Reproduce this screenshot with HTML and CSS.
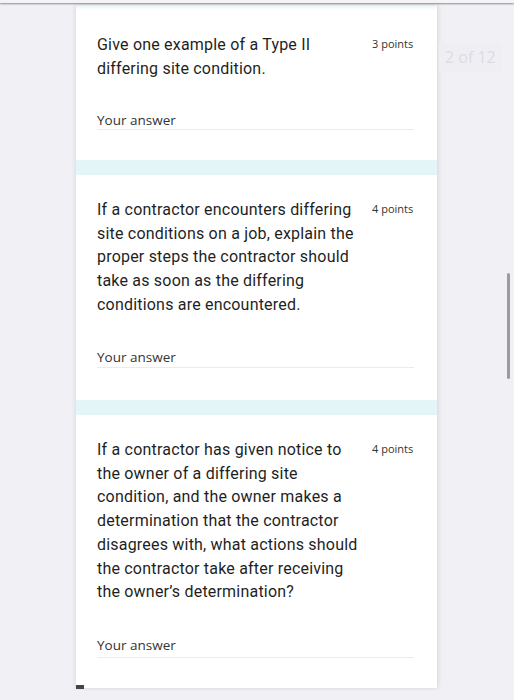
FILE: index.html
```html
<!DOCTYPE html>
<html>
<head>
<meta charset="utf-8">
<link rel="stylesheet" href="styles.css">
</head>
<body>
<div class="topbar"></div>
<div class="stage">
  <div class="column">
    <div class="card card-first">
      <div class="qrow">
        <div class="question">Give one example of a Type II<br>differing site condition.</div>
        <div class="points">3 points</div>
      </div>
      <div class="answer">Your answer</div>
    </div>
    <div class="band"></div>
    <div class="card card-mid">
      <div class="qrow">
        <div class="question">If a contractor encounters differing<br>site conditions on a job, explain the<br>proper steps the contractor should<br>take as soon as the differing<br>conditions are encountered.</div>
        <div class="points">4 points</div>
      </div>
      <div class="answer">Your answer</div>
    </div>
    <div class="band"></div>
    <div class="card card-last">
      <div class="qrow">
        <div class="question">If a contractor has given notice to<br>the owner of a differing site<br>condition, and the owner makes a<br>determination that the contractor<br>disagrees with, what actions should<br>the contractor take after receiving<br>the owner’s determination?</div>
        <div class="points">4 points</div>
      </div>
      <div class="answer">Your answer</div>
      <span class="mark"></span>
    </div>
  </div>
  <div class="side">
    <div class="pager">2 of 12</div>
    <div class="scrollbar"></div>
  </div>
</div>
</body>
</html>
```
FILE: styles.css
```css
html, body {
  margin: 0;
  padding: 0;
}
body {
  background: #f1f0f5;
  font-family: "Open Sans", Roboto, sans-serif;
  color: #202124;
  width: 514px;
  height: 700px;
  overflow: hidden;
}
.topbar {
  height: 3px;
  background: #f4f4f6;
  box-shadow: 0 1px 2px rgba(60, 60, 60, 0.55);
  position: relative;
  z-index: 2;
}
.stage {
  display: flex;
  padding-left: 76px;
  margin-top: 2px;
}
.column {
  width: 361px;
  display: flex;
  flex-direction: column;
  box-shadow: 2px 0 4px rgba(0, 0, 0, 0.08), -2px 0 4px rgba(0, 0, 0, 0.06);
}
.card {
  background: #fff;
  padding: 23px 23px 0 21px;
  position: relative;
}
.card-first {
  padding-top: 28px;
  height: 127px;
  background: linear-gradient(#e6f3f3, #fff 5px);
}
.card-mid {
  height: 202px;
}
.card-last {
  height: 250px;
}
.band {
  height: 15px;
  background: #e3f5f6;
}
.qrow {
  display: flex;
  justify-content: space-between;
}
.question {
  font-family: Roboto, "Open Sans", sans-serif;
  font-size: 16px;
  letter-spacing: 0.2px;
  line-height: 23.7px;
  color: #1f1f1f;
}
.points {
  font-size: 11px;
  color: #333;
  padding-top: 3px;
  width: 42px;
  white-space: nowrap;
}
.answer {
  margin-top: 33px;
  font-size: 13.5px;
  color: #333;
  padding-bottom: 0;
  border-bottom: 1px solid #ebebeb;
}
.card-first .answer {
  margin-top: 31px;
}
.card-mid .answer {
  margin-top: 31px;
  padding-bottom: 1px;
}
.card-last .answer {
  margin-top: 32px;
  padding-bottom: 3px;
}
.mark {
  position: absolute;
  left: 0;
  bottom: -1px;
  width: 8px;
  height: 4px;
  background: #444;
}
.side {
  flex: 1;
  position: relative;
}
.pager {
  position: absolute;
  left: 2px;
  top: 38px;
  padding: 3px 6px;
  font-size: 16px;
  color: #dcdce4;
  background: #efeef3;
}
.scrollbar {
  position: absolute;
  left: 70px;
  top: 268px;
  width: 3px;
  height: 106px;
  background: #9c9c9c;
  border-radius: 2px;
}
```
